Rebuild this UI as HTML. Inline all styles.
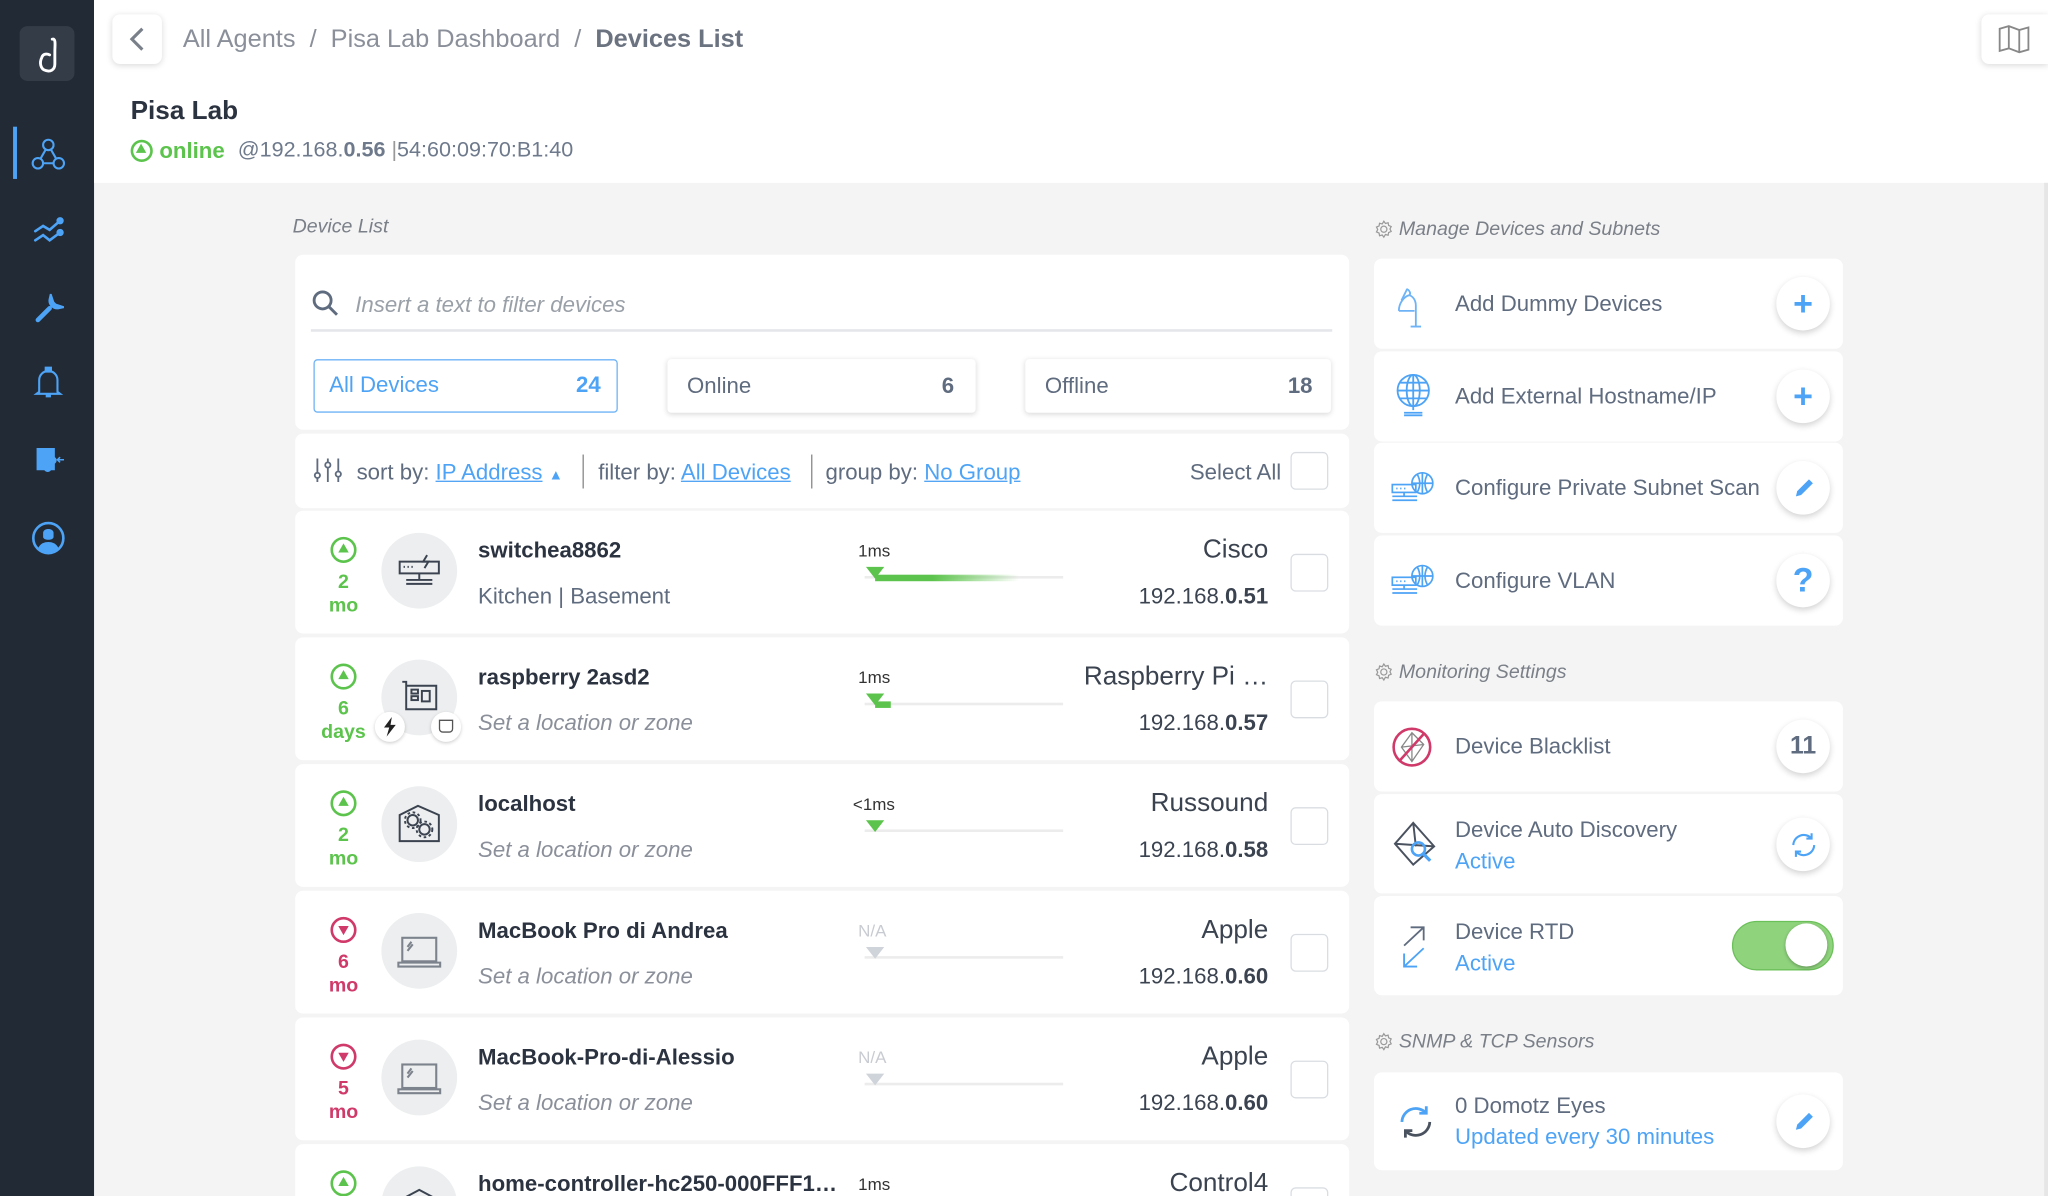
<!DOCTYPE html>
<html><head><meta charset="utf-8">
<style>
*{box-sizing:border-box;margin:0;padding:0}
html,body{width:2048px;height:1196px;overflow:hidden;background:#f4f4f4;font-family:"Liberation Sans",Arial,sans-serif}
#s{position:absolute;left:0;top:0;width:1568px;height:916px;transform:scale(1.306122);transform-origin:0 0;background:#f4f4f4;overflow:hidden}
.a{position:absolute}
.side{left:0;top:0;width:72px;height:916px;background:#222a36}
.top{left:72px;top:0;width:1496px;height:140px;background:#fff}
.card{background:#fff;border-radius:6px}
.t{position:absolute;white-space:nowrap;line-height:1}
.c{color:#5f6b7e}
.row{position:absolute;left:226px;width:807px;height:94px;background:#fff;border-radius:6px}
.st{position:absolute;left:27px;top:20px;width:20px;height:20px;border-radius:50%;border:2px solid #5cc44c}
.st:after{content:"";position:absolute;left:4px;top:3px;border-left:4px solid transparent;border-right:4px solid transparent;border-bottom:7px solid #5cc44c}
.st.off{border-color:#d03a6a}
.st.off:after{border-bottom:0;border-top:7px solid #d03a6a;top:5px}
.num{position:absolute;left:17px;width:40px;text-align:center;font-weight:bold;font-size:15px;color:#5cc44c;line-height:18px;top:46px}
.num.off{color:#d03a6a}
.av{position:absolute;left:66px;top:17px;width:58px;height:58px;border-radius:50%;background:#eceeef}
.nm{left:140px;top:22px;font-size:17px;font-weight:bold;color:#2c3340}
.sub{left:140px;top:57px;font-size:17px;color:#5f6b7e}
.sub.i{font-style:italic;color:#8a8f99}
.lat{left:431px;top:24px;font-size:13px;color:#333}
.line{position:absolute;left:436px;top:50px;width:152px;height:2px;background:#ececec}
.tri{position:absolute;left:437px;top:43px;border-left:7px solid transparent;border-right:7px solid transparent;border-top:9px solid #5cc44c}
.tri.na{border-top-color:#cfd4da}
.vend{right:62px;top:20px;font-size:20px;color:#3b4350}
.ip{right:62px;top:57px;font-size:17px;color:#3b4350}
.cb{position:absolute;left:762px;top:33px;width:29px;height:29px;border:1.5px solid #d9dde2;border-radius:4px;background:#fff}
.rc{position:absolute;left:1052px;width:359px;background:#fff;border-radius:6px}
.rt{left:62px;font-size:17px;color:#5f6b7e}
.blue,.rt.blue{color:#4da3f5}
.btn{position:absolute;right:10px;width:41px;height:41px;border-radius:50%;background:#fff;box-shadow:0 2px 5px rgba(0,0,0,.18);display:flex;align-items:center;justify-content:center;color:#4da3f5;font-weight:bold;font-size:26px}
.hd{font-size:15px;font-style:italic;color:#7a7f88}
.fb{position:absolute;top:275px;height:41px;border-radius:3px;background:#fff;box-shadow:0 1px 4px rgba(0,0,0,.15)}
</style></head><body><div id="s">

<div class="a side">
  <div class="a" style="left:15px;top:20px;width:42px;height:42px;border-radius:6px;background:#343c48"></div>
  <svg class="a" style="left:24px;top:27px" width="26" height="30" viewBox="0 0 26 30"><path d="M16 3 C19 2 18 8 18 12 L18 22 C18 27 14 28 11 27 C7 26 6 21 8 17 C9 14 12 14 14 15" fill="none" stroke="#fff" stroke-width="2.2" stroke-linecap="round"/></svg>
  <div class="a" style="left:10px;top:97px;width:3px;height:40px;background:#4da3f5"></div>
  <svg class="a" style="left:24px;top:105px" width="26" height="26" viewBox="0 0 26 26" fill="none" stroke="#4da3f5" stroke-width="1.6"><circle cx="13" cy="6" r="4"/><circle cx="5" cy="20" r="4"/><circle cx="21" cy="20" r="4"/><path d="M11 9.5L7 16.5M15 9.5L19 16.5M9 20H17"/></svg>
  <svg class="a" style="left:24px;top:166px" width="26" height="24" viewBox="0 0 26 24" fill="none" stroke="#4da3f5" stroke-width="2" stroke-linecap="round"><path d="M3 11L9 7L14 10L22 3M3 18L9 14L14 18L22 12"/><circle cx="22" cy="3" r="1.8" fill="#4da3f5"/><circle cx="22" cy="12" r="1.8" fill="#4da3f5"/></svg>
  <svg class="a" style="left:25px;top:225px" width="24" height="24" viewBox="0 0 24 24"><path d="M4 20L13 11M14 4a5 5 0 0 0 6 6l-3-1-2-2z" stroke="#4da3f5" stroke-width="3.5" stroke-linecap="round" fill="#4da3f5"/></svg>
  <svg class="a" style="left:25px;top:280px" width="24" height="26" viewBox="0 0 24 26" fill="none" stroke="#4da3f5" stroke-width="1.6"><rect x="10" y="1.5" width="4" height="3" fill="#4da3f5"/><path d="M5 20V11a7 7 0 0 1 14 0v9l2 1.5H3z"/><path d="M10 23h4" stroke-width="2.5"/></svg>
  <svg class="a" style="left:25px;top:340px" width="26" height="26" viewBox="0 0 26 26"><path d="M3 3H17V10a3 3 0 0 1 0 5V20H14a3 3 0 0 1-5 0H3z" fill="#4da3f5"/><path d="M24 12H19M21 10L19 12L21 14" stroke="#4da3f5" stroke-width="1.2" fill="none"/></svg>
  <svg class="a" style="left:24px;top:399px" width="26" height="26" viewBox="0 0 26 26"><circle cx="13" cy="13" r="11.5" fill="none" stroke="#4da3f5" stroke-width="2"/><path d="M5 21c2-4 5-5 8-5s6 1 8 5a11 11 0 0 1-16 0z" fill="#4da3f5"/><path d="M9 9c0-4 8-4 8 0v3c0 3-8 3-8 0z" fill="#4da3f5"/></svg>
</div>

<div class="a top"></div>
<div class="a card" style="left:86px;top:11px;width:38px;height:38px;box-shadow:0 1px 5px rgba(0,0,0,.15)"></div>
<svg class="a" style="left:98px;top:20px" width="14" height="20" viewBox="0 0 14 20"><path d="M11 2L3 10L11 18" fill="none" stroke="#7a808a" stroke-width="2.4"/></svg>
<div class="t" style="left:140px;top:21px;font-size:19.4px;color:#8a8f99">All Agents &nbsp;/ &nbsp;Pisa Lab Dashboard &nbsp;/ &nbsp;<b style="color:#6b7280">Devices List</b></div>
<div class="a card" style="left:1517px;top:11px;width:51px;height:38px;box-shadow:0 1px 5px rgba(0,0,0,.15);border-radius:6px 0 0 6px"></div>
<svg class="a" style="left:1529px;top:18px" width="26" height="24" viewBox="0 0 26 24" fill="none" stroke="#888" stroke-width="1.4"><path d="M2 4L9 2L17 5L24 3V20L17 22L9 19L2 21Z M9 2V19 M17 5V22"/></svg>
<div class="t" style="left:100px;top:75px;font-size:20px;font-weight:bold;color:#2c3340">Pisa Lab</div>
<div class="a" style="left:100px;top:107px;width:17px;height:17px;border-radius:50%;border:2px solid #5cc44c"></div>
<div class="a" style="left:104px;top:110px;border-left:4.5px solid transparent;border-right:4.5px solid transparent;border-bottom:7px solid #5cc44c"></div>
<div class="t" style="left:122px;top:107px;font-size:17px;font-weight:bold;color:#5cc44c">online</div>
<div class="t" style="left:182px;top:107px;font-size:16.5px;color:#6e7a8c">@192.168.<b>0.56</b> <span style="color:#999">|</span>54:60:09:70:B1:40</div>

<div class="t hd" style="left:224px;top:166px">Device List</div>
<div class="a card" style="left:226px;top:195px;width:807px;height:134px"></div>
<svg class="a" style="left:238px;top:221px" width="22" height="22" viewBox="0 0 22 22" fill="none" stroke="#5f6b7e" stroke-width="2.2"><circle cx="9" cy="9" r="6.5"/><path d="M14 14L20 20"/></svg>
<div class="t" style="left:272px;top:225px;font-size:17px;font-style:italic;color:#9aa0a8">Insert a text to filter devices</div>
<div class="a" style="left:238px;top:252px;width:782px;height:1.5px;background:#e4e6ea"></div>
<div class="a" style="left:240px;top:275px;width:233px;height:41px;border:1.5px solid #6fb3f7;border-radius:3px;background:#fff"></div>
<div class="t blue" style="left:252px;top:286px;font-size:17px">All Devices</div>
<div class="t blue" style="left:441px;top:286px;font-size:17px;font-weight:bold">24</div>
<div class="fb" style="left:511px;width:236px"></div>
<div class="t c" style="left:526px;top:287px;font-size:17px">Online</div>
<div class="t c" style="left:721px;top:287px;font-size:17px;font-weight:bold">6</div>
<div class="fb" style="left:785px;width:234px"></div>
<div class="t c" style="left:800px;top:287px;font-size:17px">Offline</div>
<div class="t c" style="left:986px;top:287px;font-size:17px;font-weight:bold">18</div>

<div class="a card" style="left:226px;top:332px;width:807px;height:57px"></div>
<svg class="a" style="left:240px;top:350px" width="22" height="20" viewBox="0 0 22 20" fill="none" stroke="#5f6b7e" stroke-width="1.4"><path d="M3 1V19M11 1V19M19 1V19"/><circle cx="3" cy="14" r="2" fill="#fff"/><circle cx="11" cy="6" r="2" fill="#fff"/><circle cx="19" cy="13" r="2" fill="#fff"/></svg>
<div class="t c" style="left:273px;top:353px;font-size:17px">sort by: <span class="blue" style="text-decoration:underline">IP Address</span> <span class="blue" style="font-size:11px">&#9650;</span></div>
<div class="a" style="left:446px;top:348px;width:1px;height:26px;background:#888"></div>
<div class="t c" style="left:458px;top:353px;font-size:17px">filter by: <span class="blue" style="text-decoration:underline">All Devices</span></div>
<div class="a" style="left:621px;top:348px;width:1px;height:26px;background:#888"></div>
<div class="t c" style="left:632px;top:353px;font-size:17px">group by: <span class="blue" style="text-decoration:underline">No Group</span></div>
<div class="t c" style="left:911px;top:353px;font-size:17px">Select All</div>
<div class="a" style="left:988px;top:346px;width:29px;height:29px;border:1.5px solid #d9dde2;border-radius:4px"></div>

<div class="row" style="top:391px">
 <div class="st"></div><div class="num">2<br>mo</div>
 <div class="av"><svg style="position:absolute;left:13px;top:16px" width="32" height="26" viewBox="0 0 32 26" fill="none" stroke="#3b4350" stroke-width="1.5"><rect x="1" y="6" width="30" height="9"/><path d="M4 10h1M7 10h1M10 10h1M16 20V15M6 20h20M6 23h20M22 1l-3 5h4l-3 5"/></svg></div>
 <div class="t nm">switchea8862</div><div class="t sub">Kitchen | Basement</div>
 <div class="t lat">1ms</div><div class="line"></div><div class="a" style="left:444px;top:49px;width:110px;height:5px;background:linear-gradient(90deg,#5cc44c 40%,rgba(92,196,76,0))"></div><div class="tri"></div>
 <div class="t vend">Cisco</div><div class="t ip">192.168.<b>0.51</b></div><div class="cb"></div>
</div>
<div class="row" style="top:488px">
 <div class="st"></div><div class="num">6<br>days</div>
 <div class="av"><svg style="position:absolute;left:14px;top:14px" width="30" height="30" viewBox="0 0 30 30" fill="none" stroke="#3b4350" stroke-width="1.5"><path d="M2 3H5V24H28V6H5"/><rect x="9" y="9" width="5" height="3"/><rect x="9" y="14" width="5" height="3"/><rect x="17" y="10" width="6" height="8"/></svg></div>
 <div class="a" style="left:61px;top:57px;width:23px;height:23px;border-radius:50%;background:#fff;box-shadow:0 1px 3px rgba(0,0,0,.2)"><svg style="position:absolute;left:6px;top:4px" width="11" height="15" viewBox="0 0 11 15"><path d="M7 0L1 8H5L3 15L10 6H6Z" fill="#222"/></svg></div>
 <div class="a" style="left:104px;top:57px;width:23px;height:23px;border-radius:50%;background:#fff;box-shadow:0 1px 3px rgba(0,0,0,.2)"><div style="position:absolute;left:6px;top:6px;width:11px;height:10px;border:1.3px solid #555;border-radius:0 0 3px 3px"></div></div>
 <div class="t nm">raspberry 2asd2</div><div class="t sub i">Set a location or zone</div>
 <div class="t lat">1ms</div><div class="line"></div><div class="a" style="left:444px;top:49px;width:12px;height:5px;background:#5cc44c"></div><div class="tri"></div>
 <div class="t vend">Raspberry Pi …</div><div class="t ip">192.168.<b>0.57</b></div><div class="cb"></div>
</div>
<div class="row" style="top:585px">
 <div class="st"></div><div class="num">2<br>mo</div>
 <div class="av"><svg style="position:absolute;left:12px;top:12px" width="34" height="34" viewBox="0 0 34 34" fill="none" stroke="#3b4350" stroke-width="1.5"><path d="M2 10L16 3L32 10V30H2Z"/><circle cx="12" cy="14" r="4"/><circle cx="21" cy="21" r="4"/><circle cx="12" cy="14" r="6" stroke-dasharray="2 2"/><circle cx="21" cy="21" r="6" stroke-dasharray="2 2"/></svg></div>
 <div class="t nm">localhost</div><div class="t sub i">Set a location or zone</div>
 <div class="t lat" style="left:427px">&lt;1ms</div><div class="line"></div><div class="tri"></div>
 <div class="t vend">Russound</div><div class="t ip">192.168.<b>0.58</b></div><div class="cb"></div>
</div>
<div class="row" style="top:682px">
 <div class="st off"></div><div class="num off">6<br>mo</div>
 <div class="av"><svg style="position:absolute;left:12px;top:17px" width="34" height="26" viewBox="0 0 34 26" fill="none" stroke="#7d838c" stroke-width="1.6"><rect x="4" y="2" width="26" height="18"/><path d="M1 21H33V24H1Z M8 9L11 5 M8 12L12 7"/></svg></div>
 <div class="t nm">MacBook Pro di Andrea</div><div class="t sub i">Set a location or zone</div>
 <div class="t lat" style="color:#c8ccd2">N/A</div><div class="line"></div><div class="tri na"></div>
 <div class="t vend">Apple</div><div class="t ip">192.168.<b>0.60</b></div><div class="cb"></div>
</div>
<div class="row" style="top:779px">
 <div class="st off"></div><div class="num off">5<br>mo</div>
 <div class="av"><svg style="position:absolute;left:12px;top:17px" width="34" height="26" viewBox="0 0 34 26" fill="none" stroke="#7d838c" stroke-width="1.6"><rect x="4" y="2" width="26" height="18"/><path d="M1 21H33V24H1Z M8 9L11 5 M8 12L12 7"/></svg></div>
 <div class="t nm">MacBook-Pro-di-Alessio</div><div class="t sub i">Set a location or zone</div>
 <div class="t lat" style="color:#c8ccd2">N/A</div><div class="line"></div><div class="tri na"></div>
 <div class="t vend">Apple</div><div class="t ip">192.168.<b>0.60</b></div><div class="cb"></div>
</div>
<div class="row" style="top:876px;height:40px;border-radius:6px 6px 0 0">
 <div class="st"></div>
 <div class="av"><svg style="position:absolute;left:12px;top:12px" width="34" height="34" viewBox="0 0 34 34" fill="none" stroke="#3b4350" stroke-width="1.5"><path d="M2 14L17 6L32 14"/></svg></div>
 <div class="t nm">home-controller-hc250-000FFF1…</div>
 <div class="t lat">1ms</div>
 <div class="t vend">Control4</div><div class="cb"></div>
</div>

<svg class="a" style="left:1052px;top:168px" width="15" height="15" viewBox="0 0 16 16" fill="none" stroke="#999" stroke-width="1"><circle cx="8" cy="8" r="2.5"/><path d="M8 1.5l1.3 1.8 2.2-.6.4 2.2 2.1.9-1 2 1 2-2.1.9-.4 2.2-2.2-.6L8 14.5l-1.3-1.8-2.2.6-.4-2.2-2.1-.9 1-2-1-2 2.1-.9.4-2.2 2.2.6z"/></svg>
<div class="t hd" style="left:1071px;top:168px">Manage Devices and Subnets</div>
<div class="rc" style="top:198px;height:69px"><svg class="a" style="left:17px;top:20px" width="26" height="34" viewBox="0 0 26 34" fill="none" stroke="#6fb3f7" stroke-width="1.4"><path d="M2 20C2 14 6 9 10 8C12 6 8 2 8 4L4 12M10 8C13 9 15 12 15 16V32M11 32H19M2 20H14"/></svg><div class="t rt" style="top:26px">Add Dummy Devices</div><div class="btn" style="top:14px">+</div></div>
<div class="rc" style="top:269px;height:69px"><svg class="a" style="left:16px;top:17px" width="28" height="34" viewBox="0 0 28 34" fill="none" stroke="#4da3f5" stroke-width="1.4"><circle cx="14" cy="13" r="12"/><ellipse cx="14" cy="13" rx="5" ry="12"/><path d="M14 1V28M2 13H26M4 7H24M4 19H24M7 30H21M7 32H21"/></svg><div class="t rt" style="top:26px">Add External Hostname/IP</div><div class="btn" style="top:14px">+</div></div>
<div class="rc" style="top:339px;height:69px"><svg class="a" style="left:13px;top:22px" width="34" height="26" viewBox="0 0 34 26" fill="none" stroke="#4da3f5" stroke-width="1.3"><rect x="1" y="10" width="18" height="6"/><path d="M4 13h1M7 13h1M10 13h1M10 16V19M1 19H20M1 22H20"/><circle cx="24" cy="9" r="8"/><path d="M24 1V17M16 9H32M20 2Q24 9 20 16M28 2Q24 9 28 16"/></svg><div class="t rt" style="top:26px">Configure Private Subnet Scan</div><div class="btn" style="top:14px"><svg width="18" height="18" viewBox="0 0 18 18"><path d="M3 15L4 11L13 2L16 5L7 14Z" fill="#4da3f5"/></svg></div></div>
<div class="rc" style="top:410px;height:69px"><svg class="a" style="left:13px;top:22px" width="34" height="26" viewBox="0 0 34 26" fill="none" stroke="#4da3f5" stroke-width="1.3"><rect x="1" y="10" width="18" height="6"/><path d="M4 13h1M7 13h1M10 13h1M10 16V19M1 19H20M1 22H20"/><circle cx="24" cy="9" r="8"/><path d="M24 1V17M16 9H32M20 2Q24 9 20 16M28 2Q24 9 28 16"/></svg><div class="t rt" style="top:26px">Configure VLAN</div><div class="btn" style="top:14px">?</div></div>

<svg class="a" style="left:1052px;top:507px" width="15" height="15" viewBox="0 0 16 16" fill="none" stroke="#999" stroke-width="1"><circle cx="8" cy="8" r="2.5"/><path d="M8 1.5l1.3 1.8 2.2-.6.4 2.2 2.1.9-1 2 1 2-2.1.9-.4 2.2-2.2-.6L8 14.5l-1.3-1.8-2.2.6-.4-2.2-2.1-.9 1-2-1-2 2.1-.9.4-2.2 2.2.6z"/></svg>
<div class="t hd" style="left:1071px;top:507px">Monitoring Settings</div>
<div class="rc" style="top:537px;height:69px"><svg class="a" style="left:13px;top:19px" width="32" height="32" viewBox="0 0 32 32" fill="none"><path d="M16 5L25 14L16 27L8 16Z M8 16L25 14 M16 5V27" stroke="#888" stroke-width="1"/><circle cx="16" cy="16" r="14" stroke="#d03a6a" stroke-width="2"/><path d="M7 26L25 6" stroke="#d03a6a" stroke-width="2"/></svg><div class="t rt" style="top:26px">Device Blacklist</div><div class="btn" style="top:14px;color:#5f6b7e;font-size:19px">11</div></div>
<div class="rc" style="top:608px;height:76px"><svg class="a" style="left:14px;top:20px" width="36" height="36" viewBox="0 0 36 36" fill="none" stroke-width="1.5"><path d="M16 2L32 20L16 34L2 18Z M2 18L32 20 M16 2L18 20" stroke="#4a5260"/><circle cx="20" cy="22" r="5" stroke="#4da3f5" stroke-width="2"/><path d="M24 26L29 31" stroke="#4da3f5" stroke-width="2.5"/></svg><div class="t rt" style="top:19px">Device Auto Discovery</div><div class="t rt blue" style="top:43px">Active</div><div class="btn" style="top:18px"><svg width="24" height="24" viewBox="0 0 24 24" fill="none" stroke="#4da3f5" stroke-width="1.6"><path d="M4 12a8 8 0 0 1 14-5M20 12a8 8 0 0 1-14 5"/><path d="M18 3v4h-4M6 21v-4h4"/></svg></div></div>
<div class="rc" style="top:686px;height:76px"><svg class="a" style="left:20px;top:22px" width="22" height="34" viewBox="0 0 22 34" fill="none" stroke-width="1.4"><path d="M3 16L18 2M8 2H18V12" stroke="#5f6b7e"/><path d="M18 18L3 32M3 22V32H13" stroke="#4da3f5"/></svg><div class="t rt" style="top:19px">Device RTD</div><div class="t rt blue" style="top:43px">Active</div>
  <div class="a" style="left:274px;top:19px;width:78px;height:38px;border-radius:19px;background:#8fd47d;border:1.5px solid #6cc05a"></div><div class="a" style="left:315px;top:21px;width:32px;height:33px;border-radius:50%;background:#fff;box-shadow:0 1px 3px rgba(0,0,0,.3)"></div></div>

<svg class="a" style="left:1052px;top:790px" width="15" height="15" viewBox="0 0 16 16" fill="none" stroke="#999" stroke-width="1"><circle cx="8" cy="8" r="2.5"/><path d="M8 1.5l1.3 1.8 2.2-.6.4 2.2 2.1.9-1 2 1 2-2.1.9-.4 2.2-2.2-.6L8 14.5l-1.3-1.8-2.2.6-.4-2.2-2.1-.9 1-2-1-2 2.1-.9.4-2.2 2.2.6z"/></svg>
<div class="t hd" style="left:1071px;top:790px">SNMP &amp; TCP Sensors</div>
<div class="rc" style="top:821px;height:75px"><svg class="a" style="left:16px;top:22px" width="32" height="32" viewBox="0 0 24 24" fill="none" stroke-width="1.6"><path d="M4 12a8 8 0 0 1 14-5" stroke="#4da3f5"/><path d="M20 12a8 8 0 0 1-14 5" stroke="#4a5260"/><path d="M18 3v4h-4" stroke="#4da3f5"/><path d="M6 21v-4h4" stroke="#4a5260"/></svg><div class="t rt" style="top:17px">0 Domotz Eyes</div><div class="t rt blue" style="top:41px">Updated every 30 minutes</div><div class="btn" style="top:17px"><svg width="18" height="18" viewBox="0 0 18 18"><path d="M3 15L4 11L13 2L16 5L7 14Z" fill="#4da3f5"/></svg></div></div>
<div class="a" style="left:1565px;top:140px;width:3px;height:776px;background:#e6e6e6"></div>
</div></body></html>
